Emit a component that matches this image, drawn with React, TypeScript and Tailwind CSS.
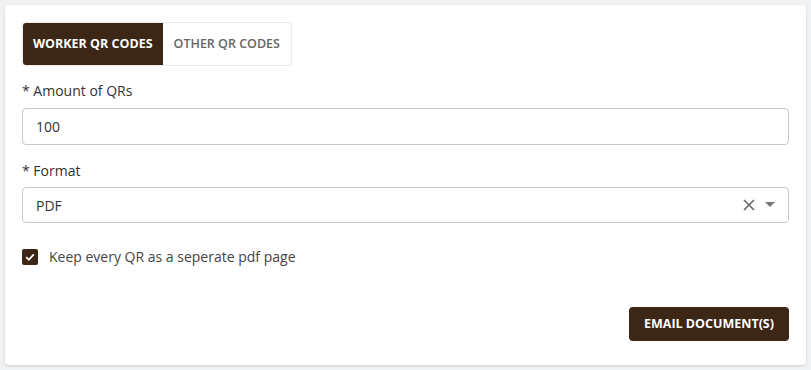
import { useState } from "react";

export default function App() {
  const [tab, setTab] = useState<"worker" | "other">("worker");
  const [keepPages, setKeepPages] = useState(true);

  return (
    <div className="min-h-[370px] bg-[#f1f2f4] p-[5px] font-['Open_Sans',sans-serif] text-[#333]">
      <div className="h-[360px] rounded-[4px] bg-white px-[17px] pt-[17px] shadow-[0_1px_3px_rgba(0,0,0,0.15)]">
        <div className="inline-flex h-[44px] rounded-[3px] border border-[#ececec]">
          <button
            onClick={() => setTab("worker")}
            className={
              tab === "worker"
                ? "rounded-l-[3px] bg-[#3c2615] px-[10px] text-[12.5px] font-bold text-white"
                : "rounded-l-[3px] px-[10px] text-[12.5px] font-semibold text-[#666]"
            }
          >
            WORKER QR CODES
          </button>
          <button
            onClick={() => setTab("other")}
            className={
              tab === "other"
                ? "rounded-r-[3px] bg-[#3c2615] px-[11px] text-[12.5px] font-bold text-white"
                : "rounded-r-[3px] px-[11px] text-[12.5px] font-semibold text-[#666]"
            }
          >
            OTHER QR CODES
          </button>
        </div>

        <label className="mt-[15px] block text-[14px] leading-[20px] text-[#333]">* Amount of QRs</label>
        <input
          defaultValue="100"
          className="mt-[7px] block h-[37px] w-full rounded-[4px] border border-[#c8c8c8] px-[13px] text-[14px] text-[#333] outline-none"
        />

        <label className="mt-[16px] block text-[14px] leading-[20px] text-[#333]">* Format</label>
        <div className="mt-[6px] flex h-[36px] w-full items-center rounded-[4px] border border-[#c8c8c8] pl-[13px] pr-[13px]">
          <span className="flex-1 text-[14px] text-[#333]">PDF</span>
          <svg width="14" height="14" viewBox="0 0 14 14" className="text-[#666]">
            <path d="M2 2L12 12M12 2L2 12" stroke="currentColor" strokeWidth="1.6" />
          </svg>
          <svg width="10" height="6" viewBox="0 0 10 6" className="ml-[9px] text-[#777]">
            <path d="M0 0H10L5 5Z" fill="currentColor" />
          </svg>
        </div>

        <label className="mt-[23px] flex cursor-pointer items-center gap-[11px]">
          <span
            onClick={() => setKeepPages(!keepPages)}
            className="flex h-[16px] w-[16px] items-center justify-center rounded-[2px] bg-[#3c2615]"
          >
            {keepPages && (
              <svg width="12" height="12" viewBox="0 0 12 12">
                <path d="M2.2 6.2L4.8 8.8L9.8 3.4" stroke="white" strokeWidth="1.8" fill="none" />
              </svg>
            )}
          </span>
          <span className="text-[14px] text-[#444]">Keep every QR as a seperate pdf page</span>
        </label>

        <div className="mt-[40px] flex justify-end">
          <button className="h-[34px] rounded-[4px] bg-[#3c2615] px-[15px] text-[12.5px] font-bold text-white">
            EMAIL DOCUMENT(S)
          </button>
        </div>
      </div>
    </div>
  );
}
